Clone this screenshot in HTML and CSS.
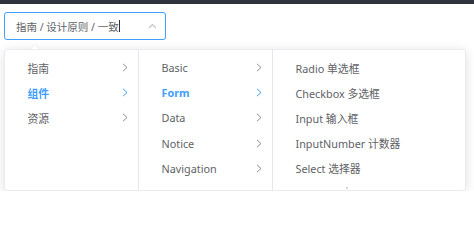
FILE: index.html
```html
<!DOCTYPE html>
<html lang="zh">
<head>
<meta charset="utf-8">
<link rel="stylesheet" href="styles.css">
</head>
<body>
<div class="topbar"></div>
<div class="demo">
  <div class="cascader">
    <div class="input">
      <span class="value">指南 / 设计原则 / 一致</span><span class="caret"></span>
      <svg class="suffix" width="9" height="6" viewBox="0 0 9 6"><path d="M1 5 L4.5 1.5 L8 5" fill="none" stroke="#c0c4cc" stroke-width="1.1"/></svg>
    </div>
  </div>
  <div class="dropdown">
    <div class="popper-arrow"></div>
    <div class="panel">
      <ul class="menu m1">
        <li class="node"><span class="label">指南</span><svg class="chev" width="6" height="9" viewBox="0 0 6 9"><path d="M1 0.8 L5 4.5 L1 8.2" fill="none" stroke="#8e9096" stroke-width="1"/></svg></li>
        <li class="node active"><span class="label">组件</span><svg class="chev" width="6" height="9" viewBox="0 0 6 9"><path d="M1 0.8 L5 4.5 L1 8.2" fill="none" stroke="#409eff" stroke-width="1"/></svg></li>
        <li class="node"><span class="label">资源</span><svg class="chev" width="6" height="9" viewBox="0 0 6 9"><path d="M1 0.8 L5 4.5 L1 8.2" fill="none" stroke="#8e9096" stroke-width="1"/></svg></li>
      </ul>
      <ul class="menu m2">
        <li class="node"><span class="label">Basic</span><svg class="chev" width="6" height="9" viewBox="0 0 6 9"><path d="M1 0.8 L5 4.5 L1 8.2" fill="none" stroke="#8e9096" stroke-width="1"/></svg></li>
        <li class="node active"><span class="label">Form</span><svg class="chev" width="6" height="9" viewBox="0 0 6 9"><path d="M1 0.8 L5 4.5 L1 8.2" fill="none" stroke="#409eff" stroke-width="1"/></svg></li>
        <li class="node"><span class="label">Data</span><svg class="chev" width="6" height="9" viewBox="0 0 6 9"><path d="M1 0.8 L5 4.5 L1 8.2" fill="none" stroke="#8e9096" stroke-width="1"/></svg></li>
        <li class="node"><span class="label">Notice</span><svg class="chev" width="6" height="9" viewBox="0 0 6 9"><path d="M1 0.8 L5 4.5 L1 8.2" fill="none" stroke="#8e9096" stroke-width="1"/></svg></li>
        <li class="node"><span class="label">Navigation</span><svg class="chev" width="6" height="9" viewBox="0 0 6 9"><path d="M1 0.8 L5 4.5 L1 8.2" fill="none" stroke="#8e9096" stroke-width="1"/></svg></li>
      </ul>
      <ul class="menu m3">
        <li class="node"><span class="label">Radio 单选框</span></li>
        <li class="node"><span class="label">Checkbox 多选框</span></li>
        <li class="node"><span class="label">Input 输入框</span></li>
        <li class="node"><span class="label">InputNumber 计数器</span></li>
        <li class="node"><span class="label">Select 选择器</span></li>
        <li class="scroll-dot"></li>
      </ul>
    </div>
  </div>
</div>
</body>
</html>
```

FILE: styles.css
```css
* { box-sizing: border-box; }
html, body {
  margin: 0;
  padding: 0;
  background: #fff;
  font-family: "Noto Sans", "Noto Sans CJK SC", sans-serif;
  color: #606266;
  overflow: hidden;
}
.topbar {
  height: 4px;
  background: #2f333b;
}
.demo {
  padding: 8px 4px 0 4px;
}
.cascader {
  width: 162px;
}
.input {
  height: 28px;
  border: 1px solid #409eff;
  border-radius: 3px;
  display: flex;
  align-items: center;
  padding-left: 11px;
  padding-right: 8px;
  font-size: 10.5px;
  color: #606266;
}
.value {
  white-space: nowrap;
}
.caret {
  display: inline-block;
  width: 1px;
  height: 12px;
  background: #303133;
}
.suffix {
  margin-left: auto;
}
.dropdown {
  position: relative;
  margin-top: 9px;
  width: 462px;
}
.popper-arrow {
  position: absolute;
  left: 26px;
  top: -5px;
  width: 0;
  height: 0;
  border-left: 5px solid transparent;
  border-right: 5px solid transparent;
  border-bottom: 5px solid #ebeef5;
}
.popper-arrow::after {
  content: "";
  position: absolute;
  left: -4px;
  top: 1px;
  border-left: 4px solid transparent;
  border-right: 4px solid transparent;
  border-bottom: 4px solid #fff;
}
.panel {
  display: flex;
  height: 142px;
  border: 1px solid #e9ebf0;
  border-radius: 3px;
  background: #fff;
  box-shadow: 0 2px 12px rgba(0, 0, 0, 0.12);
}
.menu {
  list-style: none;
  margin: 0;
  padding: 5px 0;
  border-right: 1px solid #e4e7ed;
  position: relative;
}
.m1 { width: 134px; }
.m2 { width: 134px; }
.m3 { flex: 1; border-right: none; }
.node {
  height: 25.2px;
  display: flex;
  align-items: center;
  padding-left: 22.5px;
  padding-right: 10px;
  font-size: 10.8px;
  color: #606266;
  white-space: nowrap;
}
.node.active {
  color: #409eff;
  font-weight: 700;
}
.chev {
  margin-left: auto;
}
.scroll-dot {
  position: absolute;
  left: 73px;
  bottom: 1px;
  width: 2px;
  height: 2px;
  background: #c8c9cc;
  border-radius: 1px;
}
```
